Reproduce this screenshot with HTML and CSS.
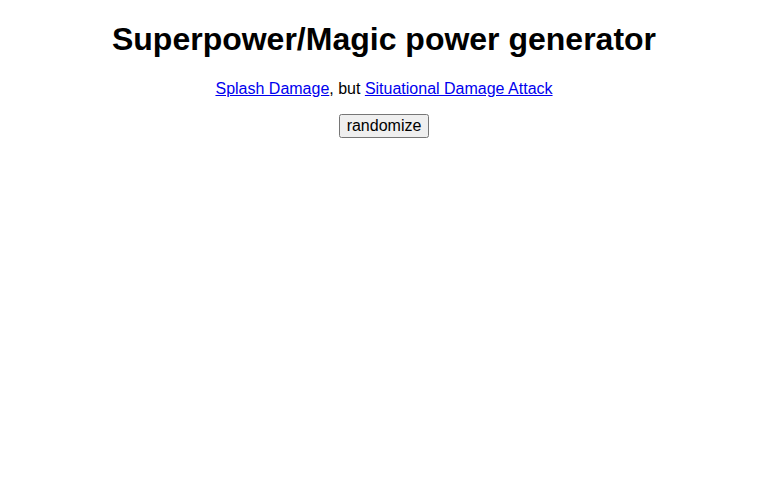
FILE: index.html
```html
<!DOCTYPE html>
<html>
<head>
<meta charset="utf-8">
<title>Superpower/Magic power generator</title>
<link rel="stylesheet" href="styles.css">
</head>
<body>
<main class="page">
  <h1 class="title">Superpower/Magic power generator</h1>
  <p class="result"><a href="#">Splash Damage</a>, but <a href="#">Situational Damage Attack</a></p>
  <button class="randomize" type="button">randomize</button>
</main>
</body>
</html>
```

FILE: styles.css
```css
body {
  margin: 8px;
  font-family: "Liberation Sans", Arial, sans-serif;
  background: #fff;
  color: #000;
}

.page {
  text-align: center;
}

.title {
  font-size: 32px;
  font-weight: bold;
  margin: 13px 0 22px;
}

.result {
  font-size: 16px;
  margin: 16px 0;
}

.result a {
  color: #0000ee;
}

.randomize {
  font-family: "Liberation Sans", Arial, sans-serif;
  font-size: 16px;
}
```
